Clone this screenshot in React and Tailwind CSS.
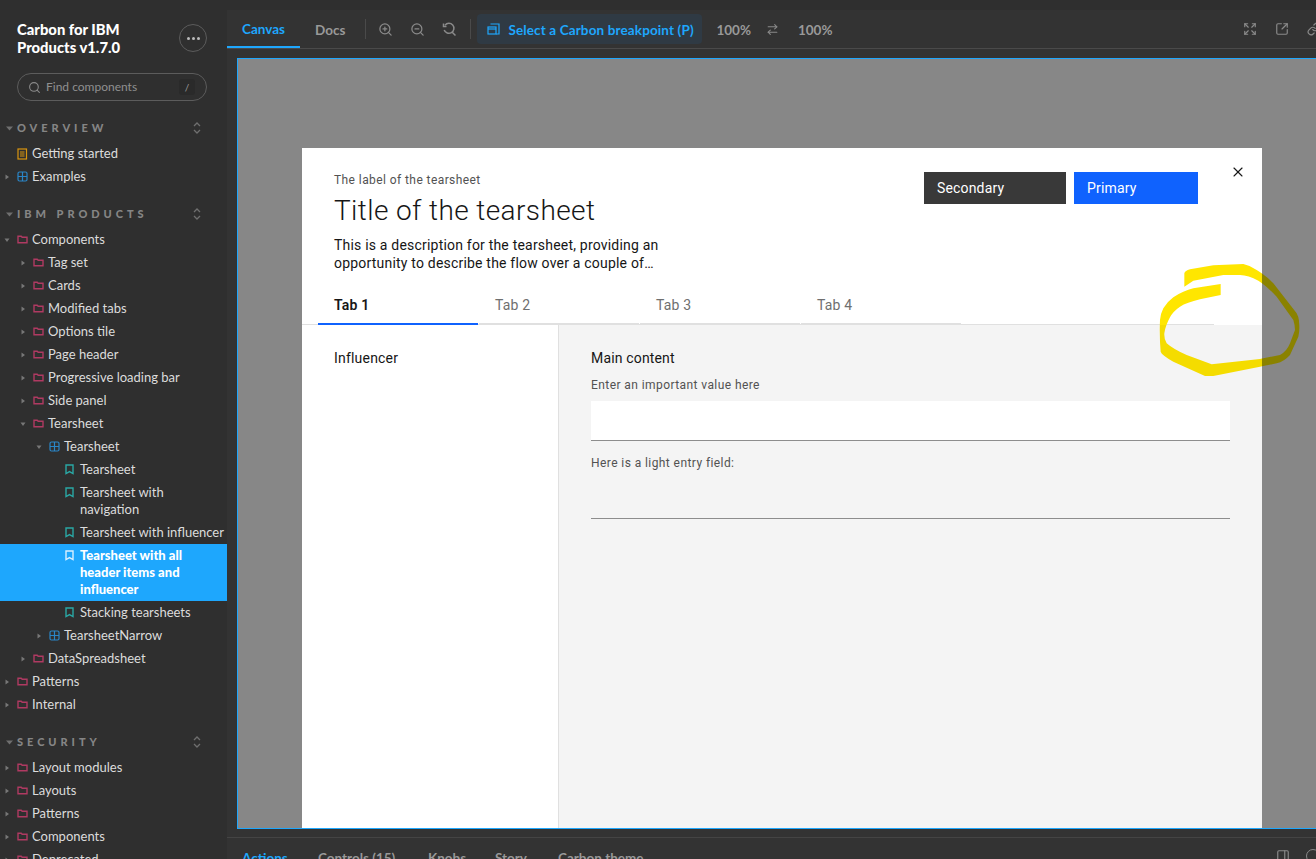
import React from "react";
import { Search, ZoomIn, ZoomOut, Expand, SquareArrowOutUpRight, Link, X, ArrowRightLeft, PanelRight } from "lucide-react";

const Arrow = ({ open }) => (
  <svg width="6" height="6" viewBox="0 0 6 6" className={open ? "text-[#777] rotate-90" : "text-[#777]"}>
    <path d="M1.5 0.5 L5 3 L1.5 5.5 Z" fill="currentColor" />
  </svg>
);

const FolderIcon = () => (
  <svg width="11" height="11" viewBox="0 0 11 11" fill="none" stroke="#b03a62" strokeWidth="1.4" className="shrink-0">
    <path d="M1 2.2 H4.2 L5.2 3.3 H10 V8.8 H1 Z" />
  </svg>
);

const GridIcon = () => (
  <svg width="11" height="11" viewBox="0 0 11 11" fill="none" stroke="#2a86c8" strokeWidth="1.2" className="shrink-0">
    <rect x="1" y="1" width="9" height="9" rx="1.5" />
    <path d="M5.5 1 V10 M1 5.5 H10" />
  </svg>
);

const DocIcon = () => (
  <svg width="11" height="12" viewBox="0 0 11 12" fill="none" stroke="#d9950f" strokeWidth="1.2" className="shrink-0">
    <rect x="1" y="1" width="8.5" height="10" />
    <path d="M3 4 H7.5 M3 6 H7.5 M3 8 H7.5" />
  </svg>
);

const BookmarkIcon = ({ active }) => (
  <svg width="9" height="11" viewBox="0 0 9 11" fill="none" stroke={active ? "#d8efff" : "#2aa8a5"} strokeWidth="1.4" className="shrink-0">
    <path d="M1 1 H8 V9.6 L4.5 7.6 L1 9.6 Z" />
  </svg>
);

const UpDown = () => (
  <svg width="10" height="14" viewBox="0 0 10 14" fill="none" stroke="#6f6f6f" strokeWidth="1.3" className="mr-[25px]">
    <path d="M2 5 L5 2 L8 5 M2 9 L5 12 L8 9" />
  </svg>
);

const paddings = ["pl-[4px]", "pl-[20px]", "pl-[36px]", "pl-[52px]"];

const TreeRow = ({ label, depth = 0, kind = "folder", arrow, active }) => (
  <div className={"flex items-start py-[3px] text-[13px] leading-[17px] " + paddings[depth] + (active ? " bg-[#1ea7fd] text-white font-black" : " text-[#dcdcdc]")}>
    <div className="flex h-[17px] w-[13px] shrink-0 items-center">{arrow ? <Arrow open={arrow === "open"} /> : null}</div>
    <div className="flex h-[17px] w-[15px] shrink-0 items-center">
      {kind === "folder" && <FolderIcon />}
      {kind === "grid" && <GridIcon />}
      {kind === "doc" && <DocIcon />}
      {kind === "story" && <BookmarkIcon active={active} />}
    </div>
    <span className={active ? "w-[125px]" : kind === "story" ? "w-[145px]" : ""}>{label}</span>
  </div>
);

const Section = ({ title, children }) => (
  <div className="mb-[18px] shrink-0">
    <div className="mb-[6px] flex h-[16px] items-center">
      <div className="flex w-[17px] justify-center pl-[1px]">
        <svg width="7" height="5" viewBox="0 0 7 5"><path d="M0 0.5 H7 L3.5 4.5 Z" fill="#6f6f6f" /></svg>
      </div>
      <span className="flex-1 text-[11px] font-black tracking-[0.36em] text-[#858585]">{title}</span>
      <UpDown />
    </div>
    {children}
  </div>
);

const Sidebar = () => (
  <aside className="flex w-[227px] shrink-0 flex-col overflow-hidden bg-[#2f2f2f] font-['Lato',sans-serif]">
    <div className="flex shrink-0 items-center justify-between pl-[17px] pr-[20px] pt-[20px]">
      <div className="text-[14.8px] font-black leading-[18px] text-white">Carbon for IBM<br />Products v1.7.0</div>
      <div className="flex h-[28px] w-[28px] items-center justify-center rounded-full border border-[#5c5c5c]">
        <span className="flex gap-[2px]">
          <i className="h-[3px] w-[3px] rounded-full bg-[#bbb]" />
          <i className="h-[3px] w-[3px] rounded-full bg-[#bbb]" />
          <i className="h-[3px] w-[3px] rounded-full bg-[#bbb]" />
        </span>
      </div>
    </div>
    <div className="mx-[17px] mb-[19px] mt-[17px] flex h-[28px] w-[190px] shrink-0 items-center rounded-full border border-[#5c5c5c] pl-[10px] pr-[11px]">
      <Search size={13} className="text-[#8a8a8a]" strokeWidth={2} />
      <span className="ml-[5px] flex-1 text-[12px] text-[#8f8f8f]">Find components</span>
      <span className="flex h-[16px] w-[16px] items-center justify-center rounded-[3px] bg-[#2a2a2a] text-[10px] text-[#999]">/</span>
    </div>
    <Section title="OVERVIEW">
      <TreeRow label="Getting started" kind="doc" />
      <TreeRow label="Examples" kind="grid" arrow="closed" />
    </Section>
    <Section title="IBM PRODUCTS">
      <TreeRow label="Components" arrow="open" />
      <TreeRow label="Tag set" depth={1} arrow="closed" />
      <TreeRow label="Cards" depth={1} arrow="closed" />
      <TreeRow label="Modified tabs" depth={1} arrow="closed" />
      <TreeRow label="Options tile" depth={1} arrow="closed" />
      <TreeRow label="Page header" depth={1} arrow="closed" />
      <TreeRow label="Progressive loading bar" depth={1} arrow="closed" />
      <TreeRow label="Side panel" depth={1} arrow="closed" />
      <TreeRow label="Tearsheet" depth={1} arrow="open" />
      <TreeRow label="Tearsheet" depth={2} kind="grid" arrow="open" />
      <TreeRow label="Tearsheet" depth={3} kind="story" />
      <TreeRow label="Tearsheet with navigation" depth={3} kind="story" />
      <TreeRow label="Tearsheet with influencer" depth={3} kind="story" />
      <TreeRow label="Tearsheet with all header items and influencer" depth={3} kind="story" active />
      <TreeRow label="Stacking tearsheets" depth={3} kind="story" />
      <TreeRow label="TearsheetNarrow" depth={2} kind="grid" arrow="closed" />
      <TreeRow label="DataSpreadsheet" depth={1} arrow="closed" />
      <TreeRow label="Patterns" arrow="closed" />
      <TreeRow label="Internal" arrow="closed" />
    </Section>
    <Section title="SECURITY">
      <TreeRow label="Layout modules" arrow="closed" />
      <TreeRow label="Layouts" arrow="closed" />
      <TreeRow label="Patterns" arrow="closed" />
      <TreeRow label="Components" arrow="closed" />
      <TreeRow label="Deprecated" arrow="closed" />
    </Section>
  </aside>
);

const ResetZoom = () => (
  <svg width="15" height="15" viewBox="0 0 15 15" fill="none" stroke="currentColor" strokeWidth="1.5">
    <path d="M3 3.2 A5 5 0 1 1 2.2 8" />
    <path d="M1.5 1.5 V4.5 H4.5" />
    <path d="M10.2 10.2 L13.5 13.5" />
  </svg>
);

const BreakpointIcon = () => (
  <svg width="13" height="12" viewBox="0 0 13 12" fill="none" stroke="#1ea7fd" strokeWidth="1.2">
    <path d="M3.5 1 H12 V11 H9" />
    <rect x="1" y="4" width="8" height="7" />
    <path d="M1 6 H9" />
  </svg>
);

const Toolbar = () => (
  <div className="flex h-[39px] shrink-0 items-center border-b border-[#4a4a4a] bg-[#333333] text-[13.5px] font-bold text-[#999]">
    <div className="flex h-[38px] w-[73px] items-center justify-center border-b-2 border-[#1ea7fd] pt-[2px] text-[#1ea7fd]">Canvas</div>
    <div className="ml-[15px] pt-[2px]">Docs</div>
    <div className="ml-[20px] h-[20px] w-px bg-[#4a4a4a]" />
    <div className="ml-[12px] flex items-center gap-[17px] text-[#8a8a8a]">
      <ZoomIn size={15} />
      <ZoomOut size={15} />
      <ResetZoom />
    </div>
    <div className="ml-[13px] h-[20px] w-px bg-[#4a4a4a]" />
    <div className="ml-[6px] flex h-[30px] w-[225px] items-center gap-[8px] whitespace-nowrap rounded-[4px] bg-[#2f3a44] pl-[10px] tracking-[0.13px] text-[#1ea7fd]">
      <BreakpointIcon />
      <span className="pt-[2px]">Select a Carbon breakpoint (P)</span>
    </div>
    <span className="ml-[14px] pt-[2px]">100%</span>
    <ArrowRightLeft size={13} className="ml-[15px] text-[#8a8a8a]" />
    <span className="ml-[19px] pt-[2px]">100%</span>
    <div className="ml-auto flex shrink-0 items-center gap-[18px] text-[#8a8a8a]">
      <Expand size={14} />
      <SquareArrowOutUpRight size={14} />
      <Link size={14} className="mr-[-5px]" />
    </div>
  </div>
);

const Field = ({ label, light }) => (
  <div>
    <div className="mb-[8px] text-[12px] leading-[16px] tracking-[0.42px] text-[#525252]">{label}</div>
    <div className={"h-[40px] w-[639px] border-b border-[#8d8d8d] " + (light ? "bg-[#f4f4f4]" : "bg-white")} />
  </div>
);

const Tab = ({ label, active }) => (
  <div className={"h-[31px] w-[160px] border-b-2 pl-[16px] text-[14px] leading-[22px] tracking-[0.16px] " + (active ? "border-[#0f62fe] font-semibold text-[#161616]" : "border-[#e0e0e0] text-[#6f6f6f]")}>
    {label}
  </div>
);

const Tearsheet = () => (
  <div className="ml-[64px] mt-[89px] flex h-[680px] w-[960px] flex-col bg-white font-['Roboto',sans-serif] text-[#161616]">
    <div className="relative h-[177px] shrink-0">
      <div className="pl-[32px] pt-[25px]">
        <div className="text-[12px] leading-[14px] tracking-[0.42px] text-[#525252]">The label of the tearsheet</div>
        <div className="mt-[6px] text-[28px] font-light leading-[36px] tracking-[0.4px]">Title of the tearsheet</div>
        <div className="mt-[7px] w-[340px] text-[14px] leading-[18px] tracking-[0.2px]">
          This is a description for the tearsheet, providing an opportunity to describe the flow over a couple of…
        </div>
      </div>
      <div className="absolute bottom-0 left-0 h-px w-[912px] bg-[#e0e0e0]" />
      <div className="absolute bottom-0 left-[16px] flex gap-px">
        <Tab label="Tab 1" active />
        <Tab label="Tab 2" />
        <Tab label="Tab 3" />
        <Tab label="Tab 4" />
      </div>
      <div className="absolute left-[622px] top-[24px] flex gap-[8px] text-[14px] tracking-[0.16px] text-white">
        <div className="flex h-[32px] w-[142px] items-center bg-[#393939] pl-[13px]">Secondary</div>
        <div className="flex h-[32px] w-[124px] items-center bg-[#0f62fe] pl-[13px]">Primary</div>
      </div>
      <X size={16} strokeWidth={1.6} className="absolute left-[928px] top-[16px]" />
    </div>
    <div className="flex flex-1">
      <div className="w-[257px] border-r border-[#e0e0e0] pl-[32px] pt-[24px] text-[14px] leading-[18px] tracking-[0.2px]">Influencer</div>
      <div className="flex-1 bg-[#f4f4f4] pl-[32px] pt-[24px]">
        <div className="text-[14px] leading-[18px] tracking-[0.16px]">Main content</div>
        <div className="mt-[10px] flex flex-col gap-[14px]">
          <Field label="Enter an important value here" />
          <Field label="Here is a light entry field:" light />
        </div>
      </div>
    </div>
  </div>
);

const ringPath =
  "M163 140 L163 100 Q165 92 180 88 L250 76 L340 72 Q360 76 380 90 Q410 108 430 130 L500 220 Q508 235 507 245 Q510 270 505 290 L480 345 Q462 365 440 370 L390 380 L250 408 L225 408 L130 365 Q95 345 92 335 Q88 290 90 240 Q92 220 100 205 Q112 185 130 172 Q160 152 190 145 L272 132 L272 165 L210 178 Q170 188 150 200 Q128 215 120 232 Q105 260 103 280 Q102 298 110 310 Q130 328 170 345 L245 373 L390 357 L450 345 Q470 335 480 310 L495 270 Q494 252 490 240 L440 170 Q412 140 385 122 Q355 106 330 105 L280 105 L190 122 Z";

// hand drawn marker ring, traced at 3x. three tints for white, grey panel and the backdrop
const Scribble = () => (
  <svg width="186" height="150" viewBox="0 0 558 450" className="pointer-events-none absolute left-[1130px] top-[240px]">
    <defs>
      <clipPath id="ring-white"><rect x="0" y="0" width="396" height="255" /></clipPath>
      <clipPath id="ring-panel"><rect x="0" y="255" width="396" height="195" /></clipPath>
      <clipPath id="ring-back"><rect x="396" y="0" width="162" height="450" /></clipPath>
    </defs>
    <path d={ringPath} fill="#ffe600" clipPath="url(#ring-white)" />
    <path d={ringPath} fill="#f4dc00" clipPath="url(#ring-panel)" />
    <path d={ringPath} fill="#8a8200" clipPath="url(#ring-back)" />
  </svg>
);

const BottomPanel = () => (
  <div className="h-[22px] shrink-0 border-t border-[#444] bg-[#333333]">
    <div className="flex pl-[15px] pt-[11px] text-[13.5px] font-bold leading-[18px] text-[#999]">
      <span className="w-[76px] text-[#1ea7fd]">Actions</span>
      <span className="w-[110px]">Controls (15)</span>
      <span className="w-[67px]">Knobs</span>
      <span className="w-[63px]">Story</span>
      <span>Carbon theme</span>
      <div className="ml-auto flex gap-[16px]">
        <PanelRight size={14} className="text-[#8a8a8a]" />
        <div className="mr-[-4px] h-[14px] w-[14px] rounded-full border border-[#8a8a8a]" />
      </div>
    </div>
  </div>
);

export default function App() {
  return (
    <div className="relative flex h-[859px] w-[1316px] overflow-hidden bg-[#333333]">
      <Sidebar />
      <main className="flex min-w-0 flex-1 flex-col font-['Lato',sans-serif]">
        <div className="h-[10px] shrink-0 bg-[#2f2f2f]" />
        <Toolbar />
        <div className="min-h-0 flex-1 pb-[8px] pl-[10px] pt-[9px]">
          <div className="h-full overflow-hidden border-b border-l border-t border-[#1ea7fd] bg-[#878787]">
            <Tearsheet />
          </div>
        </div>
        <BottomPanel />
      </main>
      <Scribble />
    </div>
  );
}
